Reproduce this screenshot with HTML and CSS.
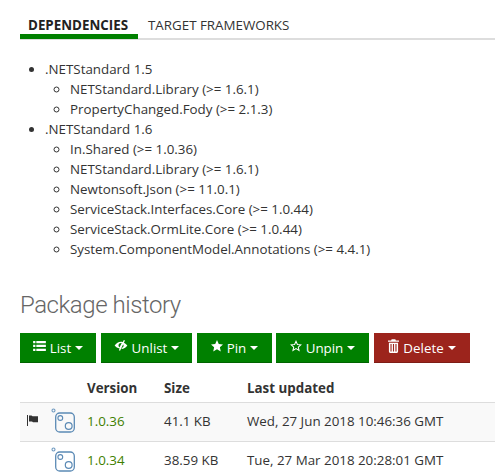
FILE: index.html
```html
<!DOCTYPE html>
<html lang="en">
<head>
    <meta charset="UTF-8">
    <title>Package details</title>
    <link rel="stylesheet" href="styles.css">
</head>
<body>
    <ul class="tabs">
        <li class="tab active">DEPENDENCIES</li>
        <li class="tab">TARGET FRAMEWORKS</li>
    </ul>

    <ul class="deps">
        <li>.NETStandard 1.5
            <ul>
                <li>NETStandard.Library (&gt;= 1.6.1)</li>
                <li>PropertyChanged.Fody (&gt;= 2.1.3)</li>
            </ul>
        </li>
        <li>.NETStandard 1.6
            <ul>
                <li>In.Shared (&gt;= 1.0.36)</li>
                <li>NETStandard.Library (&gt;= 1.6.1)</li>
                <li>Newtonsoft.Json (&gt;= 11.0.1)</li>
                <li>ServiceStack.Interfaces.Core (&gt;= 1.0.44)</li>
                <li>ServiceStack.OrmLite.Core (&gt;= 1.0.44)</li>
                <li>System.ComponentModel.Annotations (&gt;= 4.4.1)</li>
            </ul>
        </li>
    </ul>

    <h2 class="history-title">Package history</h2>

    <div class="actions">
        <button class="btn btn-list">
            <svg class="icon" width="13" height="10" viewBox="0 0 14 11"><path fill="#fff" d="M0 0h2.500v2.500H0zM3.500 0H14v2.500H3.500zM0 4.200h2.500v2.500H0zM3.500 4.200H14v2.500H3.500zM0 8.400h2.500v2.500H0zM3.500 8.400H14v2.500H3.500z"/></svg>
            List <span class="caret"></span>
        </button>
        <button class="btn btn-unlist">
            <svg class="icon" width="14" height="11" viewBox="0 0 15 13"><path fill="#fff" d="M0 6.500C2 3.500 4.500 2 7.500 2c.8 0 1.500.1 2.200.3L10.800 0l1.400.7-5.800 12-1.400-.7.900-1.900C3.400 9.600 1.400 8.300 0 6.500zM5.500 4.200a3 3 0 0 0 .2 4.600l2.600-5.300c-1-.2-2 .1-2.800.7zM11 3.200c1.600.8 2.900 1.900 4 3.300-1.800 2.500-4.200 4-7 4.100l.8-1.500a3 3 0 0 0 1.200-4.200z"/></svg>
            Unlist <span class="caret"></span>
        </button>
        <button class="btn btn-pin">
            <svg class="icon" width="12" height="12" viewBox="0 0 13 13"><path fill="#fff" d="M6.500 0l1.900 4.300 4.600.5-3.400 3.100 1 4.600-4.100-2.400-4.100 2.400 1-4.600L0 4.800l4.600-.5z"/></svg>
            Pin <span class="caret"></span>
        </button>
        <button class="btn btn-unpin">
            <svg class="icon" width="12" height="12" viewBox="0 0 13 13"><path fill="none" stroke="#fff" stroke-width="1.100" d="M6.500 1.400l1.500 3.400 3.700.4-2.700 2.500.8 3.600-3.300-1.900-3.300 1.900.8-3.600-2.700-2.500 3.700-.4z"/></svg>
            Unpin <span class="caret"></span>
        </button>
        <button class="btn btn-delete">
            <svg class="icon" width="11" height="14" viewBox="0 0 12 15"><path fill="#fff" d="M4 0h4l.6 1.500H12v1.300H0V1.500h3.400zM1 4h10v9.500c0 .8-.6 1.500-1.300 1.500H2.300C1.600 15 1 14.300 1 13.500zm1.700 1.200v8.400h1.200V5.200zm2.700 0v8.400h1.200V5.200zm2.700 0v8.400h1.200V5.200z"/></svg>
            Delete <span class="caret"></span>
        </button>
    </div>

    <table class="versions">
        <thead>
            <tr>
                <th class="col-flag"></th>
                <th class="col-icon"></th>
                <th class="col-version">Version</th>
                <th class="col-size">Size</th>
                <th>Last updated</th>
            </tr>
        </thead>
        <tbody>
            <tr class="current">
                <td class="col-flag">
                    <svg width="11" height="11" viewBox="0 0 11 11"><path fill="#333" d="M0 0h1v11H0zM2 .5h2.500l1 .7H11v6H6l-1-.6H2z"/></svg>
                </td>
                <td class="col-icon">
                    <svg class="pkg" width="25" height="25" viewBox="0 0 25 25"><use href="#pkg-icon"/></svg>
                </td>
                <td><a class="version-link">1.0.36</a></td>
                <td>41.1 KB</td>
                <td>Wed, 27 Jun 2018 10:46:36 GMT</td>
            </tr>
            <tr>
                <td class="col-flag"></td>
                <td class="col-icon">
                    <svg class="pkg" width="25" height="25" viewBox="0 0 25 25"><use href="#pkg-icon"/></svg>
                </td>
                <td><a class="version-link">1.0.34</a></td>
                <td>38.59 KB</td>
                <td>Tue, 27 Mar 2018 20:28:01 GMT</td>
            </tr>
        </tbody>
    </table>

    <svg class="defs" width="0" height="0">
        <symbol id="pkg-icon" viewBox="0 0 25 25">
            <circle cx="2.500" cy="2.500" r="1.500" fill="none" stroke="#6f9ac0" stroke-width="1.100"/>
            <rect x="4.700" y="5" width="18.600" height="19" rx="4" fill="none" stroke="#5b8ab5" stroke-width="1.300"/>
            <circle cx="9.300" cy="10" r="2.400" fill="none" stroke="#5b8ab5" stroke-width="1.100"/>
            <circle cx="17.700" cy="18" r="3.400" fill="none" stroke="#5b8ab5" stroke-width="1.200"/>
        </symbol>
    </svg>
</body>
</html>
```

FILE: styles.css
```css
body {
    margin: 0;
    padding: 0 0 0 20px;
    overflow: hidden;
    height: 475px;
    background: #fff;
    color: #333;
    font-family: "Open Sans", "Noto Sans", sans-serif;
    font-size: 13.35px;
    line-height: 20px;
}
.tabs {
    display: flex;
    list-style: none;
    margin: 0;
    padding: 15px 0 0;
    border-bottom: 2px solid #ddd;
}
.tab {
    padding: 0 8px;
    height: 19px;
    margin-right: 2px;
    margin-bottom: -1px;
    border-bottom: 5px solid transparent;
    position: relative;
}
.tab.active {
    width: 102px;
    font-weight: 700;
    border-bottom-color: #008000;
    color: #222;
}
.deps {
    margin: 19px 0 0;
    padding-left: 25px;
}
.deps ul {
    margin: 0;
    padding-left: 25px;
}
.history-title {
    margin: 28px 0 0;
    color: #666;
    font-family: Roboto, Lato, sans-serif;
    font-size: 24px;
    font-weight: 300;
    letter-spacing: -0.45px;
    line-height: 36px;
}
.actions {
    display: flex;
    gap: 5px;
    margin-top: 10px;
}
.btn {
    display: flex;
    align-items: center;
    justify-content: center;
    gap: 4px;
    height: 30px;
    padding: 0 10px;
    border: 0;
    border-bottom: 1px solid #006400;
    color: #fff;
    background: #008000;
    font-family: inherit;
    font-size: 13.35px;
}
.icon { margin-bottom: 4px; }
.btn-list { width: 76px; }
.btn-unlist { width: 91px; }
.btn-pin { width: 75px; }
.btn-unpin { width: 93px; margin-left: -1px; }
.btn-delete {
    width: 96px;
    background: #9c241c;
    border-bottom-color: #7e1d16;
}
.caret {
    width: 0;
    height: 0;
    border-top: 4px solid #fff;
    border-left: 4px solid transparent;
    border-right: 4px solid transparent;
}
.versions {
    width: 475px;
    margin-top: 15px;
    border-collapse: collapse;
    table-layout: fixed;
}
.versions th {
    height: 24px;
    padding: 0;
    text-align: left;
    vertical-align: top;
    font-weight: 700;
    border-bottom: 1px solid #ddd;
}
.versions td {
    height: 36px;
    padding: 0 0 2px;
    border-bottom: 1px solid #ddd;
}
.versions tr.current td {
    background: #f9f9f9;
}
.col-flag { width: 31px; }
.col-icon { width: 36px; }
.col-version { width: 77px; }
.col-size { width: 83px; }
.col-flag svg { display: block; margin: -1px 0 0 7px; }
.pkg { display: block; margin-top: -1px; }
.version-link { color: #3f7f00; }
.defs { position: absolute; }
```
